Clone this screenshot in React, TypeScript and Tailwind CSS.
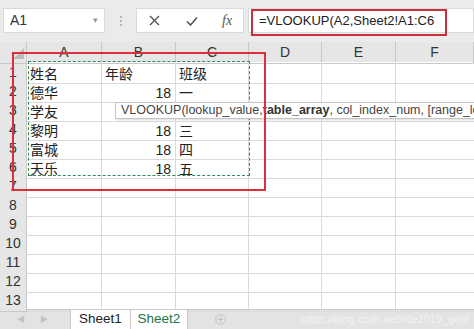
import React from "react";

const cols = ["A", "B", "C", "D", "E", "F"];

// row 3's B and C sit under the function tooltip, so they are left blank
const data: Record<number, [string, string, string]> = {
  1: ["姓名", "年龄", "班级"],
  2: ["德华", "18", "一"],
  3: ["学友", "", ""],
  4: ["黎明", "18", "三"],
  5: ["富城", "18", "四"],
  6: ["天乐", "18", "五"],
};

const gridCols = "grid grid-cols-[27px_75px_74px_73px_73px_74px_1fr]";

function Toolbar() {
  return (
    <div className="flex h-[42px] items-start bg-[#ebebeb] pt-[8px]">
      <div className="ml-[3px] flex h-[25px] w-[102px] items-center justify-between border border-[#dadada] bg-white pl-[6px] pr-[6px] text-[14px] text-[#333]">
        <span>A1</span>
        <span className="text-[9px] text-[#999]">▾</span>
      </div>
      <div className="flex h-[25px] w-[31px] flex-col items-center justify-center gap-[2px]">
        <span className="h-[2px] w-[2px] bg-[#b5b5b5]" />
        <span className="h-[2px] w-[2px] bg-[#b5b5b5]" />
        <span className="h-[2px] w-[2px] bg-[#b5b5b5]" />
      </div>
      <div className="flex h-[25px] w-[108px] items-center border border-[#dadada] bg-white text-[#555]">
        <svg className="ml-[12px]" width="11" height="11" viewBox="0 0 11 11">
          <path d="M1 1L10 10M10 1L1 10" stroke="#555" strokeWidth="1.4" />
        </svg>
        <svg className="ml-[26px]" width="12" height="10" viewBox="0 0 12 10">
          <path d="M1 5.5L4.5 9L11 1.5" stroke="#555" strokeWidth="1.6" fill="none" />
        </svg>
        <span className="ml-[24px] font-['Liberation_Serif',serif] text-[14px] italic text-[#555]">fx</span>
      </div>
      <div className="ml-[4px] flex h-[25px] flex-1 items-center border border-[#dadada] bg-white pl-[10px] text-[13px] text-[#222]">
        =VLOOKUP(A2,Sheet2!A1:C6
      </div>
    </div>
  );
}

function HeaderRow() {
  return (
    <div className={`${gridCols} h-[20px] bg-[#e6e6e6] text-[14px] text-[#333]`}>
      <div className="relative border-b border-r border-[#c8c8c8]">
        <svg className="absolute bottom-[4px] right-[2px]" width="11" height="11" viewBox="0 0 11 11">
          <path d="M11 0V11H0Z" fill="#bcbcbc" />
        </svg>
      </div>
      {cols.map((c) => (
        <div key={c} className="flex items-center justify-center border-b border-r border-[#c8c8c8]">
          {c}
        </div>
      ))}
    </div>
  );
}

function Row({ n }: { n: number }) {
  const d = data[n];
  return (
    <div className={`${gridCols} h-[19px] text-[14px] text-[#222]`}>
      <div className="flex items-center justify-center border-b border-r border-[#c8c8c8] bg-[#e6e6e6] text-[#333]">{n}</div>
      <div className="flex items-end border-b border-r border-[#dadada] pl-[3px] leading-[18px]">{d?.[0]}</div>
      <div
        className={`flex items-end border-b border-r border-[#dadada] pr-[4px] leading-[18px] ${n === 1 ? "justify-start pl-[3px]" : "justify-end"}`}
      >
        {d?.[1]}
      </div>
      <div className="flex items-end border-b border-r border-[#dadada] pl-[3px] leading-[18px]">{d?.[2]}</div>
      <div className="border-b border-r border-[#dadada]" />
      <div className="border-b border-r border-[#dadada]" />
      <div className="border-b border-[#dadada]" />
    </div>
  );
}

function SheetTabs() {
  return (
    <div className="flex h-[20px] items-stretch border-t border-[#c8c8c8] bg-[#e3e3e3] text-[13.5px]">
      <div className="flex w-[70px] items-center gap-[15px] pl-[17px] text-[8px] text-[#c2c2c2]">
        <span>◀</span>
        <span>▶</span>
      </div>
      <div className="flex w-[60px] items-center justify-center border-l border-[#c8c8c8] bg-white text-[#222]">Sheet1</div>
      <div className="flex w-[58px] items-center justify-center border-x border-[#c8c8c8] bg-white text-[#217346]">Sheet2</div>
      <div className="flex w-[64px] items-center justify-center">
        <svg width="11" height="11" viewBox="0 0 11 11">
          <circle cx="5.5" cy="5.5" r="4.8" stroke="#c0c0c0" fill="none" />
          <path d="M5.5 3V8M3 5.5H8" stroke="#c0c0c0" />
        </svg>
      </div>
      <div className="flex flex-1 items-center justify-end pr-[5px] text-[11px] text-[#f2f2f2]">
        https://blog.csdn.net/Ide2019_gold
      </div>
    </div>
  );
}

export default function App() {
  return (
    <div className="relative h-[329px] w-[474px] overflow-hidden bg-white font-['Liberation_Sans','Noto_Sans_CJK_SC',sans-serif]">
      <Toolbar />
      <HeaderRow />
      {Array.from({ length: 13 }, (_, i) => (
        <Row key={i} n={i + 1} />
      ))}
      <SheetTabs />

      {/* copy marquee round A1:C6 */}
      <div className="absolute left-[28px] top-[61px] h-[115px] w-[222px] border border-dashed border-[#2e8b57]" />

      {/* function tooltip */}
      <div className="absolute left-[115px] top-[102px] flex h-[17px] w-[380px] items-center whitespace-nowrap border border-[#c4c4c4] bg-white pl-[5px] text-[12.5px] text-[#444] shadow-[1px_1px_2px_rgba(0,0,0,0.15)]">
        VLOOKUP(lookup_value, <b className="font-bold text-[#333]">table_array</b>, col_index_num, [range_lookup])
      </div>

      {/* red annotation boxes */}
      <div className="absolute left-[12px] top-[52px] h-[139px] w-[254px] border-2 border-[#dc2f3c]" />
      <div className="absolute left-[251px] top-[9px] h-[27px] w-[196px] border-2 border-[#c8303c]" />
    </div>
  );
}
